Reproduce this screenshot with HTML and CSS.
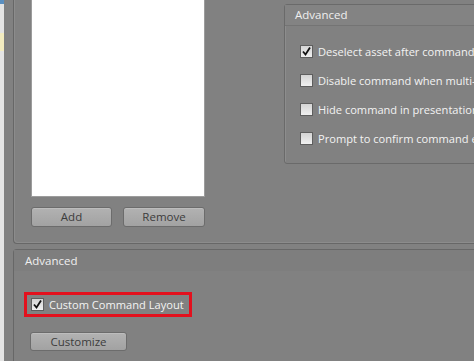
FILE: index.html
```html
<!DOCTYPE html>
<html>
<head>
<meta charset="utf-8">
<link rel="stylesheet" href="styles.css">
</head>
<body>
<div class="screen">
  <div class="edge"><span class="edge-blue"></span><span class="edge-yellow"></span></div>
  <div class="main">
    <section class="panel-top">
      <div class="left-col">
        <div class="listbox"></div>
        <div class="btn-row">
          <button class="btn btn-add">Add</button>
          <button class="btn btn-remove">Remove</button>
        </div>
      </div>
      <div class="group">
        <div class="group-head">Advanced</div>
        <div class="group-body">
          <div class="check-row"><span class="cb checked"><svg viewBox="0 0 11 11" width="11" height="11"><path d="M2 5.5 L4.5 8.5 L9 1.5" fill="none" stroke="#111" stroke-width="1.8"/></svg></span><span class="cb-label">Deselect asset after command</span></div>
          <div class="check-row"><span class="cb"></span><span class="cb-label">Disable command when multi-select</span></div>
          <div class="check-row"><span class="cb"></span><span class="cb-label">Hide command in presentation mode</span></div>
          <div class="check-row"><span class="cb"></span><span class="cb-label">Prompt to confirm command execution</span></div>
        </div>
      </div>
    </section>
    <section class="panel-bottom">
      <div class="panel-head">Advanced</div>
      <div class="panel-body">
        <div class="highlight">
          <div class="check-row tight"><span class="cb checked"><svg viewBox="0 0 11 11" width="11" height="11"><path d="M2 5.5 L4.5 8.5 L9 1.5" fill="none" stroke="#111" stroke-width="1.8"/></svg></span><span class="cb-label">Custom Command Layout</span></div>
        </div>
        <button class="btn btn-customize">Customize</button>
      </div>
    </section>
  </div>
</div>
</body>
</html>
```
FILE: styles.css
```css
html, body {
  margin: 0;
  padding: 0;
  background: #818181;
  font-family: "Open Sans", "Noto Sans", sans-serif;
}
.screen {
  display: flex;
  width: 474px;
  height: 361px;
  overflow: hidden;
  background: #818181;
}
.edge {
  width: 4px;
  flex: none;
  background: #e4e4e4;
  display: flex;
  flex-direction: column;
}
.edge-blue {
  height: 4px;
  background: #5a8fc0;
}
.edge-yellow {
  margin-top: 29px;
  height: 18px;
  background: #f3ecc0;
}
.main {
  flex: 1;
  min-width: 0;
  padding-left: 9px;
  display: flex;
  flex-direction: column;
}
.panel-top {
  box-sizing: border-box;
  width: 480px;
  height: 244px;
  flex: none;
  border-left: 1px solid #676767;
  border-bottom: 1px solid #676767;
  border-bottom-left-radius: 4px;
  box-shadow: inset 1px -1px 0 #8c8c8c;
  padding-left: 17px;
  display: flex;
  align-items: flex-start;
}
.left-col {
  width: 174px;
  flex: none;
  display: flex;
  flex-direction: column;
}
.listbox {
  box-sizing: border-box;
  height: 197px;
  background: #fff;
  border: 1px solid #9c9c9c;
  border-top: none;
}
.btn-row {
  display: flex;
  gap: 11px;
  margin-top: 10px;
}
.btn {
  box-sizing: border-box;
  height: 20px;
  padding: 0;
  border: 1px solid #6c6c6c;
  border-radius: 3px;
  background: linear-gradient(#b2b2b2, #a2a2a2);
  box-shadow: inset 0 1px 0 #bdbdbd;
  color: #3c3c3c;
  font-family: "Open Sans", "Noto Sans", sans-serif;
  font-size: 11.5px;
  line-height: 18px;
  text-align: center;
}
.btn-add { width: 81px; }
.btn-remove { width: 82px; }
.group {
  box-sizing: border-box;
  margin-left: 79px;
  margin-top: 4px;
  height: 160px;
  width: 300px;
  flex: none;
  border: 1px solid #6a6a6a;
  border-radius: 3px;
  box-shadow: inset 1px 1px 0 #8d8d8d;
}
.group-head {
  height: 20px;
  border-bottom: 1px solid #747474;
  padding-left: 10px;
  color: #efefef;
  font-size: 11.5px;
  line-height: 20px;
  background: #838383;
}
.group-body {
  padding-top: 11px;
  padding-left: 15px;
}
.check-row {
  height: 29px;
  display: flex;
  align-items: center;
  gap: 5px;
  white-space: nowrap;
}
.check-row.tight {
  height: 19px;
}
.cb {
  box-sizing: border-box;
  width: 13px;
  height: 13px;
  flex: none;
  border: 1px solid #5e5e5e;
  background: linear-gradient(#d4d4d4, #f0f0f0);
  display: flex;
  align-items: center;
  justify-content: center;
}
.cb-label {
  color: #f3f3f3;
  font-size: 11.1px;
  line-height: 16px;
}
.panel-bottom {
  box-sizing: border-box;
  width: 480px;
  flex: 1;
  margin-top: 5px;
  border-left: 1px solid #676767;
  border-top: 1px solid #676767;
  border-top-left-radius: 4px;
  display: flex;
  flex-direction: column;
}
.panel-head {
  height: 21px;
  padding-left: 11px;
  color: #efefef;
  font-size: 11.5px;
  line-height: 21px;
  background: #7e7e7e;
}
.panel-body {
  display: flex;
  flex-direction: column;
  align-items: flex-start;
  padding-top: 21px;
}
.highlight {
  box-sizing: border-box;
  width: 168px;
  height: 25px;
  margin-left: 10px;
  border: 3px solid #e3101d;
  padding-left: 4px;
  display: flex;
  align-items: center;
}
.btn-customize {
  width: 97px;
  height: 19px;
  line-height: 17px;
  margin-top: 15px;
  margin-left: 16px;
}
```
